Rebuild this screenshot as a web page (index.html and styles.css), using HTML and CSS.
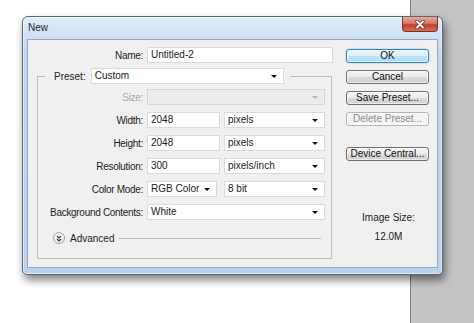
FILE: index.html
```html
<!DOCTYPE html>
<html lang="en">
<head>
    <meta charset="UTF-8">
    <meta name="viewport" content="width=device-width, initial-scale=1.0">
    <title>New</title>
    <link rel="stylesheet" href="styles.css">
</head>
<body>

    <div class="desktop">
        <!-- panel grise à droite, derrière la fenêtre -->
        <div class="side-panel"></div>

        <div class="window">
            <div class="titlebar">
                <span class="title">New</span>
                <div class="close-btn">
                    <svg width="10" height="9" viewBox="0 0 10 9">
                        <path d="M2 1.5 L8 7.5 M8 1.5 L2 7.5" stroke="#6a2a22" stroke-width="3.2" stroke-linecap="round"/>
                        <path d="M2 1.5 L8 7.5 M8 1.5 L2 7.5" stroke="#fff" stroke-width="1.8" stroke-linecap="round"/>
                    </svg>
                </div>
            </div>

            <div class="client">
                <div class="form">
                    <div class="row name-row">
                        <span class="label">Name:</span>
                        <div class="field name-field">Untitled-2</div>
                    </div>

                    <fieldset class="preset-group">
                        <legend class="preset-legend">
                            <span class="legend-label">Preset:</span>
                            <div class="field select preset-select">Custom <i class="caret"></i></div>
                        </legend>

                        <div class="row">
                            <span class="label disabled">Size:</span>
                            <div class="field select wide disabled-field"><i class="caret"></i></div>
                        </div>
                        <div class="row">
                            <span class="label">Width:</span>
                            <div class="field num">2048</div>
                            <div class="field select unit">pixels <i class="caret"></i></div>
                        </div>
                        <div class="row">
                            <span class="label">Height:</span>
                            <div class="field num">2048</div>
                            <div class="field select unit">pixels <i class="caret"></i></div>
                        </div>
                        <div class="row">
                            <span class="label">Resolution:</span>
                            <div class="field num">300</div>
                            <div class="field select unit">pixels/inch <i class="caret"></i></div>
                        </div>
                        <div class="row">
                            <span class="label">Color Mode:</span>
                            <div class="field select mode">RGB Color <i class="caret"></i></div>
                            <div class="field select unit">8 bit <i class="caret"></i></div>
                        </div>
                        <div class="row">
                            <span class="label">Background Contents:</span>
                            <div class="field select wide">White <i class="caret"></i></div>
                        </div>

                        <div class="advanced">
                            <span class="adv-icon">
                                <svg width="6" height="7" viewBox="0 0 6 7">
                                    <path d="M1 1 L3 3 L5 1 M1 4 L3 6 L5 4" fill="none" stroke="#333" stroke-width="1.1"/>
                                </svg>
                            </span>
                            <span class="adv-text">Advanced</span>
                            <span class="adv-line"></span>
                        </div>
                    </fieldset>
                </div>

                <div class="actions">
                    <div class="btn btn-default">OK</div>
                    <div class="btn">Cancel</div>
                    <div class="btn">Save Preset...</div>
                    <div class="btn btn-disabled">Delete Preset...</div>
                    <div class="btn device">Device Central...</div>

                    <div class="image-size">
                        <p>Image Size:</p>
                        <p>12.0M</p>
                    </div>
                </div>
            </div>
        </div>
    </div>

</body>
</html>
```

FILE: styles.css
```css
body {
    margin: 0;
    background-color: #fff;
    font-family: "Liberation Sans", Arial, sans-serif;
    font-size: 10px;
    color: #1b1b1b;
    overflow: hidden;
}

.desktop {
    position: relative;
    width: 474px;
    height: 323px;
}

/* Panneau gris à droite */
.side-panel {
    position: absolute;
    top: 0;
    right: 0;
    width: 63px;
    height: 100%;
    background-color: #c4c4c4;
    border-left: 1px solid #7c7c7c;
}

/* Fenêtre style Aero */
.window {
    position: absolute;
    left: 22px;
    top: 16px;
    width: 411px;
    padding: 0 4px 6px 4px;
    border: 1px solid #56687c;
    border-radius: 6px 6px 5px 5px;
    background: linear-gradient(to bottom, #e2edf9 0px, #cfe1f5 18px, #bed5ee 40px, #b9d1ec 100%);
    box-shadow: inset 0 0 0 1px rgba(255, 255, 255, 0.55), 2px 5px 9px rgba(0, 0, 0, 0.5);
}

.titlebar {
    display: flex;
    justify-content: space-between;
    align-items: flex-start;
    height: 22px;
    padding-left: 1px;
}

.title {
    margin-top: 5px;
    line-height: 12px;
    color: #1c2633;
}

.close-btn {
    width: 34px;
    height: 14px;
    display: flex;
    align-items: center;
    justify-content: center;
    border: 1px solid #7d3328;
    border-top: none;
    border-radius: 0 0 4px 4px;
    background: linear-gradient(to bottom, #e6a99d 0%, #d47a6b 45%, #c5412f 55%, #d66b55 100%);
}

.client {
    display: flex;
    background-color: #f0f0f0;
    border: 1px solid #94a9c4;
}

.form {
    width: 296px;
    padding: 7px 0 0 9px;
}

.row {
    display: flex;
    align-items: center;
    gap: 4px;
    height: 16px;
    margin-bottom: 7px;
}

.label {
    width: 105px;
    text-align: right;
    white-space: nowrap;
    letter-spacing: -0.3px;
}

.label.disabled {
    color: #a6a6a6;
}

.name-row {
    margin-bottom: 0;
}

.name-row .label {
    width: 106px;
}

.field {
    box-sizing: border-box;
    height: 16px;
    line-height: 14px;
    padding: 0 3px;
    background-color: #fff;
    border: 1px solid #dadada;
    white-space: nowrap;
}

.name-field {
    width: 186px;
}

.select {
    display: flex;
    align-items: center;
    padding-right: 6px;
}

.caret {
    width: 0;
    height: 0;
    margin-left: auto;
    border-left: 3px solid transparent;
    border-right: 3px solid transparent;
    border-top: 3px solid #111;
}

.wide {
    width: 178px;
}

.num {
    width: 73px;
}

.unit {
    width: 101px;
}

.mode {
    width: 70px;
    margin-right: 3px;
}

.disabled-field {
    background-color: #ececec;
    border-color: #d6d6d6;
}

.disabled-field .caret {
    border-top-color: #b5b5b5;
}

/* Groupe Preset */
.preset-group {
    margin: 5px 0 8px 0;
    padding: 5px 5px 14px 0;
    width: 288px;
    border: 1px solid #bdbdbd;
}

.preset-legend {
    display: flex;
    align-items: center;
    gap: 5px;
    margin-left: 7px;
    padding: 0 6px 0 9px;
}

.preset-select {
    width: 193px;
}

.preset-group .row:last-of-type {
    margin-bottom: 0;
}

.advanced {
    display: flex;
    align-items: center;
    height: 12px;
    margin-top: 12px;
    padding-left: 15px;
}

.adv-icon {
    box-sizing: border-box;
    width: 12px;
    height: 12px;
    display: flex;
    align-items: center;
    justify-content: center;
    border: 1px solid #a3a3a3;
    border-radius: 50%;
    background: radial-gradient(circle at 50% 35%, #ffffff, #e3e3e3);
}

.adv-text {
    margin-left: 5px;
}

.adv-line {
    width: 202px;
    margin-left: 5px;
    border-top: 1px solid #bcbcbc;
}

/* Boutons */
.actions {
    width: 83px;
    margin-left: 13px;
    padding-top: 9px;
}

.btn {
    box-sizing: border-box;
    height: 14px;
    line-height: 12px;
    margin-bottom: 7px;
    text-align: center;
    border: 1px solid #707070;
    border-radius: 3px;
    background: linear-gradient(to bottom, #f4f4f4 0%, #ebebeb 50%, #dcdcdc 51%, #cfcfcf 100%);
    box-shadow: inset 0 0 0 1px rgba(255, 255, 255, 0.6);
    color: #111;
}

.btn-default {
    border-color: #3c7fb1;
    background: linear-gradient(to bottom, #eaf6fd 0%, #d9f0fc 50%, #bee6fd 51%, #a7d9f5 100%);
    box-shadow: inset 0 0 0 1px rgba(255, 255, 255, 0.7), 0 0 2px #7cc6f0;
}

.btn-disabled {
    border-color: #b3b6b8;
    background: #f4f4f4;
    color: #8a8a8a;
}

.device {
    margin-top: 21px;
}

.image-size {
    margin-top: 51px;
    text-align: center;
    padding-left: 2px;
}

.image-size p {
    margin: 0 0 7px 0;
    line-height: 12px;
}
```
